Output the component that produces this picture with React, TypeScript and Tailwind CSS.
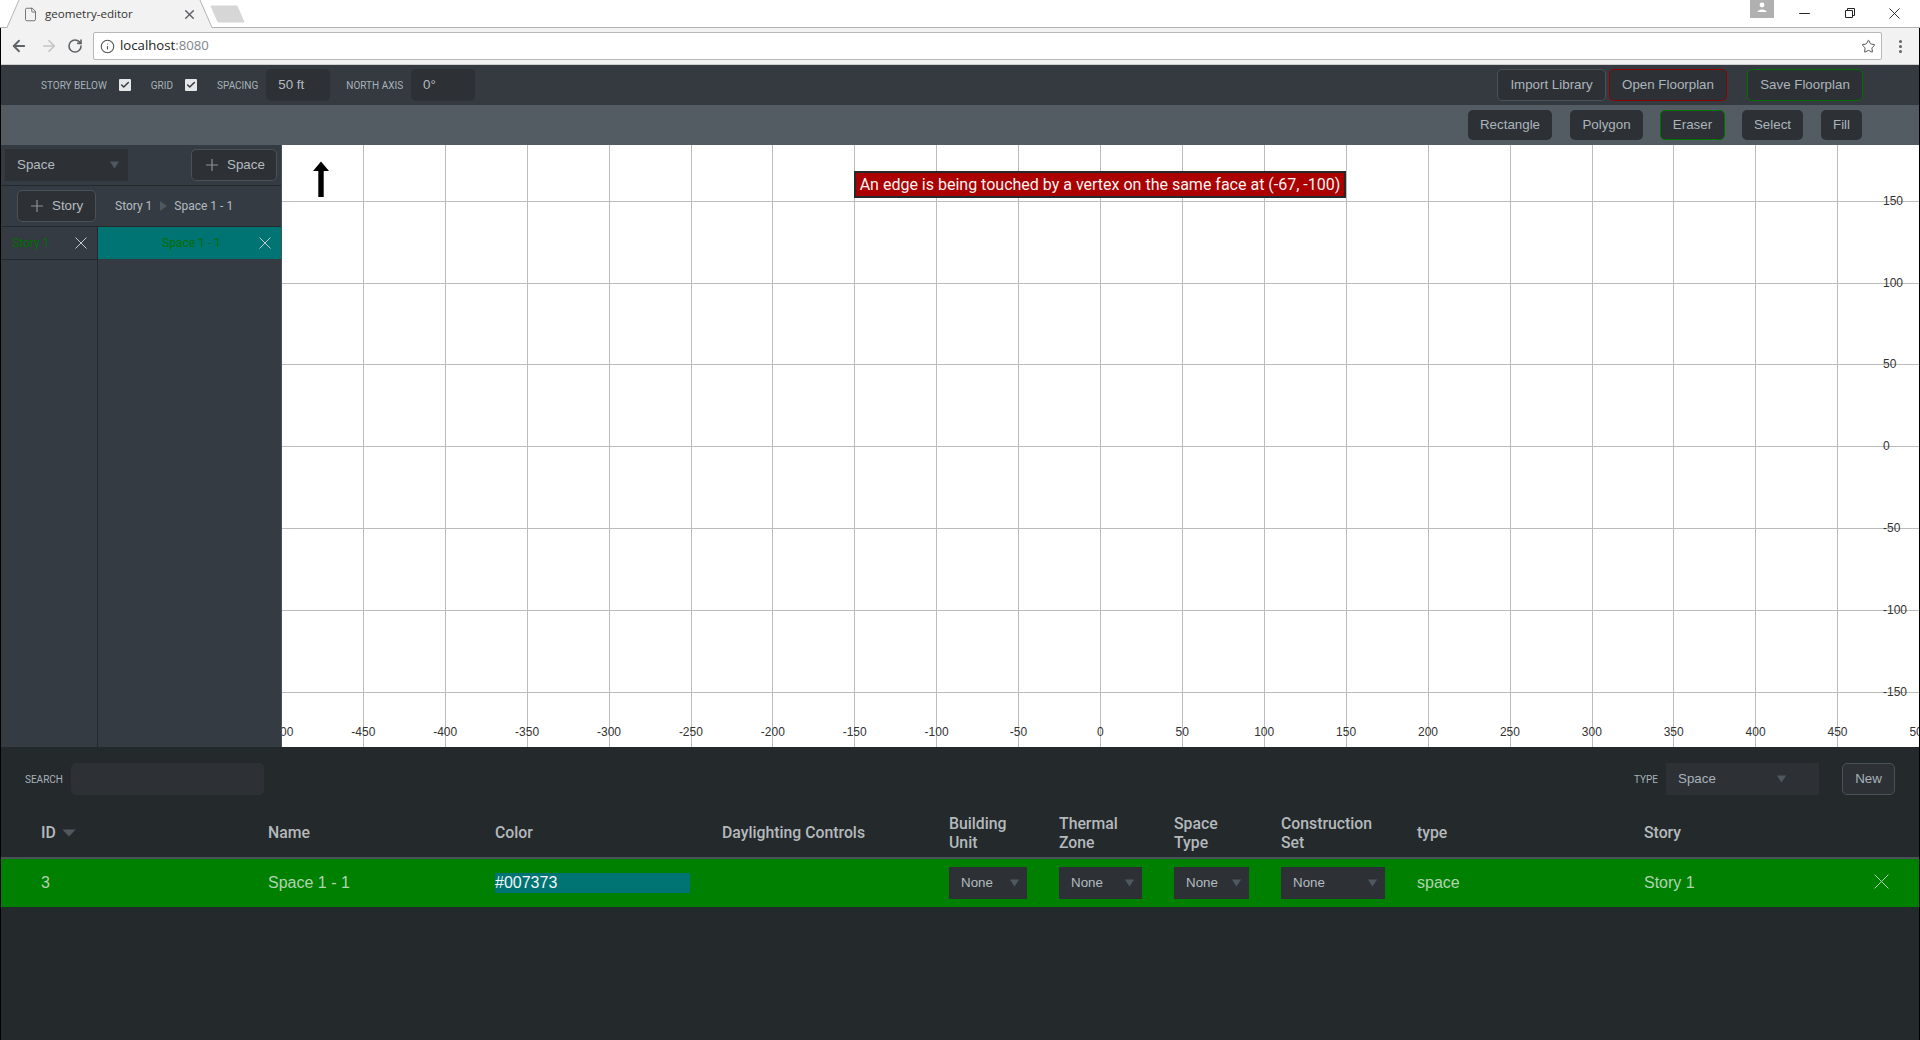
import React from "react";
import { ArrowLeft, ArrowRight, Check, EllipsisVertical, File, Info, Minus, RotateCw, Star, X } from "lucide-react";

const font = "[font-family:Roboto,sans-serif]";
// form controls keep the browser default face and size
const control = "[font-family:'Liberation_Sans',Arial,sans-serif] text-[13.33px]";

// grid positions read off the editor canvas, in page pixels
const CANVAS_LEFT = 282;
const CANVAS_TOP = 145;
const xTicks = Array.from({ length: 21 }, (_, i) => i - 10);
const yTicks = [
  { label: "150", y: 201 },
  { label: "100", y: 283 },
  { label: "50", y: 364 },
  { label: "0", y: 446 },
  { label: "-50", y: 528 },
  { label: "-100", y: 610 },
  { label: "-150", y: 692 },
];

const Caret = ({ className = "" }: { className?: string }) => (
  <svg width="11" height="8" viewBox="0 0 12 9" preserveAspectRatio="none" className={className}>
    <path d="M1 0.5 H11 L6 8.5 Z" fill="#50585f" />
  </svg>
);

const Plus = () => (
  <svg width="12" height="12" viewBox="0 0 12 12" stroke="#8a9197" strokeWidth="1.2">
    <path d="M6 0 V12 M0 6 H12" />
  </svg>
);

const Thin = ({ color = "#c3c9cd", size = 12, stroke = 1 }: { color?: string; size?: number; stroke?: number }) => (
  <svg width={size} height={size} viewBox="0 0 12 12" stroke={color} strokeWidth={stroke} fill="none">
    <path d="M0.5 0.5 L11.5 11.5 M11.5 0.5 L0.5 11.5" />
  </svg>
);

const Tick = () => (
  <div className="flex h-3 w-3 items-center justify-center rounded-[1px] bg-[#e4e6e7]">
    <Check size={10} strokeWidth={3.5} color="#33393e" />
  </div>
);

const Label = ({ children, className = "" }: { children: React.ReactNode; className?: string }) => (
  <span className={`pt-px text-[10px] leading-none text-[#a8b2b9] uppercase ${className}`}>{children}</span>
);

const Field = ({ value }: { value: string }) => (
  <div className={`flex h-8 w-16 items-center rounded-[5px] bg-[#2d3136] pl-3 text-[#b4bbc0] ${control}`}>{value}</div>
);

const TopButton = ({ text, border, className = "" }: { text: string; border: string; className?: string }) => (
  <button className={`h-8 rounded-[5px] border bg-[#2d3136] text-[#abb5bc] ${control} ${border} ${className}`}>{text}</button>
);

const ToolButton = ({ text, className = "" }: { text: string; className?: string }) => (
  <button className={`h-[30px] rounded-[5px] bg-[#2d3136] text-[#abb5bc] ${control} ${className}`}>{text}</button>
);

const SmallSelect = ({ width }: { width: string }) => (
  <div className={`flex h-8 items-center justify-between bg-[#2d3136] pl-3 pr-[7px] text-[#b4bbc0] ${control} ${width}`}>
    None
    <Caret />
  </div>
);

const Chrome = () => (
  <div className="bg-white">
    <div className="flex h-[28px] border-b border-[#b3b3b3]">
      <div className="relative flex h-[28px] w-[212px] shrink-0 items-center pl-[23px]">
        <svg width="212" height="28" viewBox="0 0 212 28" className="absolute inset-0">
          <path d="M7 28 L19 0 H200 L212 28 Z" fill="#f2f2f2" />
          <path d="M7 27.5 L19 0 M200 0 L212 27.5" stroke="#b3b3b3" fill="none" />
        </svg>
        <File size={15} strokeWidth={1.3} color="#5a5a5a" className="relative" />
        <span className="relative ml-[7px] text-[11.6px] text-[#333] [font-family:'Open_Sans',sans-serif]">geometry-editor</span>
        <X size={15} strokeWidth={2.4} color="#5f6368" className="absolute left-[182px] top-[7px]" />
      </div>
      <svg width="36" height="27" viewBox="0 0 36 27" className="-ml-[2px] shrink-0">
        <path d="M1 6 H27 L34 22 H8 Z" fill="#d6d6d6" stroke="#d6d6d6" strokeLinejoin="round" />
      </svg>
      <div className="ml-auto mr-[3px] flex h-[18px] items-start">
        <div className="mr-[8px] flex h-[18px] w-6 items-start justify-center bg-[#b0b0b0]">
          <svg width="10" height="10" viewBox="0 0 10 10" className="mt-[2px]" fill="#fff">
            <circle cx="5" cy="3" r="2.4" />
            <path d="M0.5 10 C0.5 6.5 9.5 6.5 9.5 10 Z" />
          </svg>
        </div>
        <div className="flex w-[45px] justify-center pt-[5px]"><Minus size={17} strokeWidth={1.4} color="#222" /></div>
        <div className="flex w-[45px] justify-center pt-[8px]">
          <svg width="10" height="10" viewBox="0 0 10 10" fill="none" stroke="#222">
            <path d="M0.5 2.5 H7.5 V9.5 H0.5 Z M2.5 2.5 V0.5 H9.5 V7.5 H7.5" />
          </svg>
        </div>
        <div className="flex w-[45px] justify-center pt-[8px]"><Thin color="#222" size={11} /></div>
      </div>
    </div>
  </div>
);

const AddressBar = () => (
  <div className="flex h-[37px] items-center border-b border-[#cfcfcf] bg-[#f2f2f2] pl-[9px] pr-[10px]">
    <ArrowLeft size={18} strokeWidth={2.4} color="#5f6368" />
    <ArrowRight size={18} strokeWidth={2.2} color="#c4c4c4" className="ml-[12px]" />
    <RotateCw size={16} strokeWidth={2.4} color="#5f6368" className="ml-[9px]" />
    <div className="ml-[10px] flex h-[28px] flex-1 items-center rounded-[2px] border border-[#b8b8b8] bg-white pl-[6px] pr-[5px] [font-family:'Open_Sans',sans-serif]">
      <Info size={15} strokeWidth={1.8} color="#555" />
      <span className="ml-[5px] text-[13.2px] text-[#222]">
        localhost<span className="text-[#80868b]">:8080</span>
      </span>
      <Star size={15} strokeWidth={1.6} color="#555" className="ml-auto" />
    </div>
    <EllipsisVertical size={17} strokeWidth={2.4} color="#666" className="ml-[10px]" />
  </div>
);

const TopBars = () => (
  <>
    <div className="flex h-10 items-center justify-between bg-[#343a40] pl-[40px] pr-[56px]">
      <div className="flex items-center">
        <Label>Story Below</Label>
        <div className="ml-3"><Tick /></div>
        <Label className="ml-5">Grid</Label>
        <div className="ml-3"><Tick /></div>
        <Label className="ml-5 mr-2">Spacing</Label>
        <Field value="50 ft" />
        <Label className="ml-4 mr-2">North Axis</Label>
        <Field value="0°" />
      </div>
      <div className="flex items-center">
        <TopButton text="Import Library" border="border-[#4a5258]" className="w-[109px]" />
        <TopButton text="Open Floorplan" border="border-[#8f0000]" className="ml-[3px] w-[118px]" />
        <TopButton text="Save Floorplan" border="border-[#007000]" className="ml-5 w-[116px]" />
      </div>
    </div>
    <div className="flex h-10 items-center justify-end bg-[#525c62] pr-[57px]">
      <ToolButton text="Rectangle" className="w-[84px]" />
      <ToolButton text="Polygon" className="ml-[18px] w-[73px]" />
      <ToolButton text="Eraser" className="ml-[17px] h-8 w-[65px] border border-[#007000]" />
      <ToolButton text="Select" className="ml-[17px] w-[61px]" />
      <ToolButton text="Fill" className="ml-[18px] w-[41px]" />
    </div>
  </>
);

const Sidebar = () => (
  <div className="flex w-[281px] shrink-0 flex-col border-r border-[#4a5258] bg-[#343b42] text-[#b4bbc0]">
    <div className="flex h-[41px] items-center justify-between border-b border-[#24292c] pl-1 pr-1">
      <div className={`flex h-8 w-[123px] items-center justify-between bg-[#2d3136] pl-3 pr-2 ${control}`}>
        Space
        <Caret />
      </div>
      <button className={`flex h-8 w-[86px] items-center rounded-[5px] border border-[#4a5258] bg-[#2d3136] pl-[14px] ${control}`}>
        <Plus />
        <span className="ml-[9px]">Space</span>
      </button>
    </div>
    <div className="flex h-[41px] items-center border-b border-[#24292c] pl-4">
      <button className={`flex h-8 w-[79px] items-center rounded-[5px] border border-[#4a5258] bg-[#2d3136] pl-[13px] ${control}`}>
        <Plus />
        <span className="ml-[9px]">Story</span>
      </button>
      <span className="ml-[19px] text-[12px]">Story 1</span>
      <svg width="7" height="10" viewBox="0 0 7 10" className="ml-[8px]"><path d="M0 0 L7 5 L0 10 Z" fill="#50585f" /></svg>
      <span className="ml-[7px] text-[12px]">Space 1 - 1</span>
    </div>
    <div className="flex flex-1">
      <div className="w-[97px] border-r border-[#24292c]">
        <div className="flex h-[33px] items-center justify-between border-b border-[#24292c] pl-[11px] pr-[10px] text-[12px] text-[#006e00]">
          Story 1
          <Thin />
        </div>
      </div>
      <div className="flex-1">
        <div className="flex h-[32px] items-center justify-between bg-[#007373] pl-[64px] pr-[10px] text-[12px] text-[#006e00]">
          Space 1 - 1
          <Thin />
        </div>
      </div>
    </div>
  </div>
);

const Canvas = () => (
  <div className={`relative flex-1 overflow-hidden bg-white ${font}`}>
    <svg className="block h-full w-full" shapeRendering="crispEdges">
      {xTicks.slice(1, -1).map((k) => {
        const x = Math.floor(1100.6 + 81.9 * k) - CANVAS_LEFT + 0.5;
        return <line key={k} x1={x} x2={x} y1={0} y2={602} stroke="#bcbcbc" />;
      })}
      {yTicks.map((t) => (
        <line key={t.label} x1={0} x2={1637} y1={t.y - CANVAS_TOP + 0.5} y2={t.y - CANVAS_TOP + 0.5} stroke="#bcbcbc" />
      ))}
      <g shapeRendering="auto" fontSize="12" fill="#333" fontFamily="'Liberation Sans', Arial, sans-serif">
        {xTicks.map((k) => (
          <text key={k} x={818.4 + 81.9 * k} y={591} textAnchor="middle">{k * 50}</text>
        ))}
        {yTicks.map((t) => (
          <text key={t.label} x={1601} y={t.y - CANVAS_TOP + 4}>{t.label}</text>
        ))}
      </g>
    </svg>
    <svg width="18" height="36" viewBox="0 0 18 36" className="absolute left-[30px] top-[16px]">
      <path d="M9 0.5 L17 10 H11.7 V36 H6.3 V10 H1 Z" fill="#000" />
    </svg>
    <div className="absolute left-[572px] top-[26px] flex h-[27px] w-[492px] items-center justify-center border-2 border-[#24292c] bg-[#aa0000] text-[16px] text-[#fbf3f3]">
      An edge is being touched by a vertex on the same face at (-67, -100)
    </div>
  </div>
);

const columns = "grid grid-cols-[267px_227px_227px_227px_110px_115px_107px_136px_227px_227px_1fr]";

const BottomPanel = () => (
  <div className="flex-1 bg-[#24292c]">
    <div className="flex items-center justify-between pt-4 pl-6 pr-6">
      <div className="flex items-center">
        <Label>Search</Label>
        <div className="ml-2 h-8 w-[193px] rounded-[5px] bg-[#2d3136]" />
      </div>
      <div className="flex items-center">
        <Label>Type</Label>
        <div className={`ml-2 flex h-8 w-[153px] items-center justify-between bg-[#2d3136] pl-3 pr-8 text-[#a8b2b9] ${control}`}>
          Space
          <Caret />
        </div>
        <button className={`ml-[23px] h-8 w-[53px] rounded-[5px] border border-[#4a5258] bg-[#2d3136] text-[#a8b2b9] ${control}`}>New</button>
      </div>
    </div>
    <div className={`${columns} mt-[15px] h-[49px] items-center border-b-2 border-[#4a5258] pb-[2px] text-[15.8px] leading-[19px] font-medium text-[#b4b9bc]`}>
      <div className="flex items-center pl-[40px]">ID<Caret className="ml-[5px] h-[8px] w-[16px]" /></div>
      <div>Name</div>
      <div>Color</div>
      <div>Daylighting Controls</div>
      <div>Building<br />Unit</div>
      <div>Thermal<br />Zone</div>
      <div>Space<br />Type</div>
      <div>Construction<br />Set</div>
      <div>type</div>
      <div>Story</div>
    </div>
    <div className={`${columns} h-[48px] items-center bg-[#008000] text-[16px] text-[#b0d4b0] [font-family:'Liberation_Sans',Arial,sans-serif]`}>
      <div className="pl-[40px]">3</div>
      <div>Space 1 - 1</div>
      <div className="h-5 w-[195px] bg-[#007373] leading-5 text-[#f2f5f5]">#007373</div>
      <div />
      <SmallSelect width="w-[78px]" />
      <SmallSelect width="w-[83px]" />
      <SmallSelect width="w-[75px]" />
      <SmallSelect width="w-[104px]" />
      <div>space</div>
      <div>Story 1</div>
      <div className="flex justify-end pr-[30px] pb-[3px]"><Thin color="#b0d4b0" size={15} stroke={0.8} /></div>
    </div>
  </div>
);

const App: React.FC = () => (
  <div className="flex h-[1040px] w-[1920px] flex-col overflow-hidden bg-[#24292c]">
    <Chrome />
    <div className={`flex flex-1 flex-col border-x border-black ${font}`}>
      <AddressBar />
      <TopBars />
      <div className="flex h-[602px]">
        <Sidebar />
        <Canvas />
      </div>
      <BottomPanel />
    </div>
  </div>
);

export default App;
